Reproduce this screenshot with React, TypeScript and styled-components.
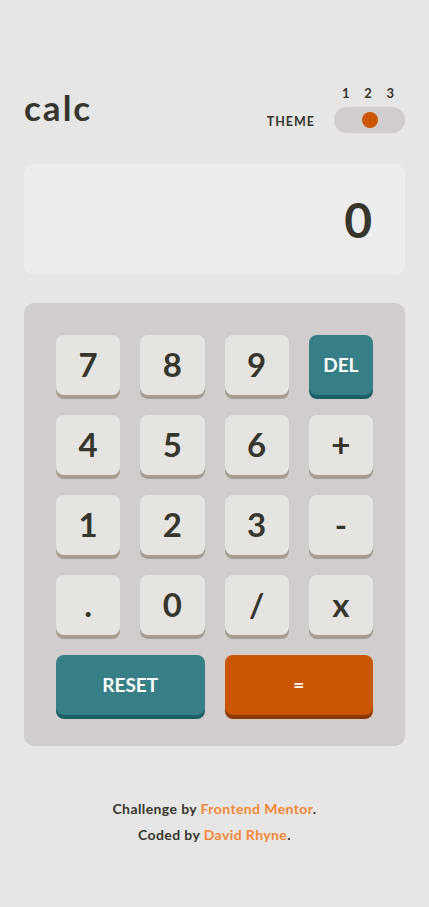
import React from "react";
import styled, { createGlobalStyle } from "styled-components";

const Global = createGlobalStyle`
  html, body { margin: 0; padding: 0; }
  body {
    background: #e6e6e6;
    font-family: "Lato", "Noto Sans", sans-serif;
    font-weight: 700;
    color: #36362c;
  }
  * { box-sizing: border-box; }
`;

const Page = styled.main`
  width: 429px;
  padding: 86px 24px 40px;
`;

const Header = styled.header`
  display: flex;
  justify-content: space-between;
  align-items: flex-end;
  height: 47px;
`;

const Logo = styled.h1`
  margin: 0;
  font-size: 35px;
  line-height: 1;
  font-weight: 700;
  letter-spacing: 2px;
  padding-bottom: 8px;
`;

const ThemeArea = styled.div`
  display: flex;
  align-items: flex-end;
  gap: 19px;
`;

const ThemeLabel = styled.span`
  font-size: 12.5px;
  letter-spacing: 1px;
  line-height: 1;
  padding-bottom: 5px;
`;

const SwitchCol = styled.div`
  display: flex;
  flex-direction: column;
  gap: 7px;
  width: 71px;
`;

const Numbers = styled.div`
  display: flex;
  justify-content: space-between;
  padding: 0 11px 0 8px;
  font-size: 13px;
  line-height: 13px;
`;

const Track = styled.div`
  height: 26px;
  border-radius: 13px;
  background: #d2cdcd;
  display: flex;
  align-items: center;
  justify-content: center;
  padding: 5px;
`;

const Knob = styled.span`
  width: 16px;
  height: 16px;
  border-radius: 50%;
  background: #ca5502;
`;

const Screen = styled.section`
  margin-top: 31px;
  height: 111px;
  border-radius: 10px;
  background: #ededed;
  display: flex;
  align-items: center;
  justify-content: flex-end;
  padding: 0 33px 0 0;
  font-size: 48px;
  line-height: 1;
`;

const Keypad = styled.section`
  margin-top: 28px;
  background: #d2cdcd;
  border-radius: 10px;
  padding: 32px 32px 31px;
  display: grid;
  grid-template-columns: repeat(4, 1fr);
  column-gap: 20px;
  row-gap: 20px;
`;

type Kind = "num" | "del" | "eq";

const kinds = {
  num: { bg: "#e5e4e1", sh: "#a69d91", fg: "#36362c", size: "33px" },
  del: { bg: "#377f86", sh: "#1b5f65", fg: "#ffffff", size: "19px" },
  eq: { bg: "#ca5502", sh: "#893901", fg: "#ffffff", size: "19px" },
};

const Key = styled.button<{ $kind: Kind; $wide?: boolean }>`
  grid-column: ${(p) => (p.$wide ? "span 2" : "auto")};
  height: 60px;
  border: none;
  border-radius: 8px;
  background: ${(p) => kinds[p.$kind].bg};
  box-shadow: 0 4px 0 ${(p) => kinds[p.$kind].sh};
  color: ${(p) => kinds[p.$kind].fg};
  font-family: inherit;
  font-weight: 700;
  font-size: ${(p) => kinds[p.$kind].size};
  line-height: 1;
  padding: 0 0 2px;
  cursor: pointer;
  display: flex;
  align-items: center;
  justify-content: center;
`;

const Footer = styled.footer`
  margin-top: 50px;
  text-align: center;
  font-size: 14px;
  letter-spacing: 0.4px;
  line-height: 26px;
`;

const Line = styled.p`
  margin: 0;
`;

const Link = styled.a`
  color: #f58633;
  text-decoration: none;
`;

const keys: { label: string; kind: Kind; wide?: boolean }[] = [
  { label: "7", kind: "num" },
  { label: "8", kind: "num" },
  { label: "9", kind: "num" },
  { label: "DEL", kind: "del" },
  { label: "4", kind: "num" },
  { label: "5", kind: "num" },
  { label: "6", kind: "num" },
  { label: "+", kind: "num" },
  { label: "1", kind: "num" },
  { label: "2", kind: "num" },
  { label: "3", kind: "num" },
  { label: "-", kind: "num" },
  { label: ".", kind: "num" },
  { label: "0", kind: "num" },
  { label: "/", kind: "num" },
  { label: "x", kind: "num" },
  { label: "RESET", kind: "del", wide: true },
  { label: "=", kind: "eq", wide: true },
];

export default function App() {
  return (
    <>
      <Global />
      <Page>
        <Header>
          <Logo>calc</Logo>
          <ThemeArea>
            <ThemeLabel>THEME</ThemeLabel>
            <SwitchCol>
              <Numbers>
                <span>1</span>
                <span>2</span>
                <span>3</span>
              </Numbers>
              <Track>
                <Knob />
              </Track>
            </SwitchCol>
          </ThemeArea>
        </Header>
        <Screen>0</Screen>
        <Keypad>
          {keys.map((k) => (
            <Key key={k.label} $kind={k.kind} $wide={k.wide}>
              {k.label}
            </Key>
          ))}
        </Keypad>
        <Footer>
          <Line>
            Challenge by <Link href="#">Frontend Mentor</Link>.
          </Line>
          <Line>
            Coded by <Link href="#">David Rhyne</Link>.
          </Line>
        </Footer>
      </Page>
    </>
  );
}
